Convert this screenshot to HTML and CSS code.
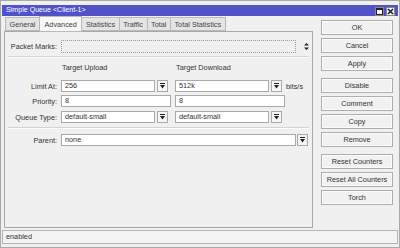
FILE: index.html
```html
<!DOCTYPE html>
<html>
<head>
<meta charset="utf-8">
<link rel="stylesheet" href="styles.css">
</head>
<body>
<div class="window">
  <div class="titlebar">
    <span class="title">Simple Queue &lt;Client-1&gt;</span>
    <div class="tctl">
      <span class="tbtn"><svg width="7" height="7" viewBox="0 0 7 7"><rect x="0.5" y="0.5" width="6" height="6" fill="none" stroke="#222" stroke-width="1"/><line x1="0" y1="1.5" x2="7" y2="1.5" stroke="#222"/></svg></span>
      <span class="tbtn"><svg width="7" height="7" viewBox="0 0 7 7"><path d="M1 1 L6 6 M6 1 L1 6" stroke="#222" stroke-width="1.6"/></svg></span>
    </div>
  </div>
  <div class="main">
    <div class="left">
      <div class="tabs">
        <span class="tab">General</span>
        <span class="tab active">Advanced</span>
        <span class="tab">Statistics</span>
        <span class="tab">Traffic</span>
        <span class="tab">Total</span>
        <span class="tab">Total Statistics</span>
      </div>
      <div class="panel">
        <div class="pm-row">
          <span class="lbl">Packet Marks:</span>
          <div class="field dotted"></div>
          <span class="updown"><svg width="5" height="7" viewBox="0 0 5 7"><path d="M2.5 0 L5 2.6 L0 2.6 Z M0 4.4 L5 4.4 L2.5 7 Z" fill="#222"/></svg></span>
        </div>
        <div class="sep"></div>
        <div class="frow hdr-row">
          <span></span>
          <span class="hdr">Target Upload</span>
          <span class="hdr">Target Download</span>
          <span></span>
        </div>
        <div class="frow limit">
          <span class="lbl">Limit At:</span>
          <div class="combo"><div class="field">256</div><span class="dd"><svg width="5" height="6" viewBox="0 0 5 6"><rect x="0" y="0" width="5" height="1" fill="#222"/><path d="M0 2 L5 2 L2.5 5.5 Z" fill="#222"/></svg></span></div>
          <div class="combo"><div class="field">512k</div><span class="dd"><svg width="5" height="6" viewBox="0 0 5 6"><rect x="0" y="0" width="5" height="1" fill="#222"/><path d="M0 2 L5 2 L2.5 5.5 Z" fill="#222"/></svg></span></div>
          <span class="unit">bits/s</span>
        </div>
        <div class="frow prio">
          <span class="lbl">Priority:</span>
          <div class="field">8</div>
          <div class="field">8</div>
          <span></span>
        </div>
        <div class="frow qtype">
          <span class="lbl">Queue Type:</span>
          <div class="combo"><div class="field">default-small</div><span class="dd"><svg width="5" height="6" viewBox="0 0 5 6"><rect x="0" y="0" width="5" height="1" fill="#222"/><path d="M0 2 L5 2 L2.5 5.5 Z" fill="#222"/></svg></span></div>
          <div class="combo"><div class="field">default-small</div><span class="dd"><svg width="5" height="6" viewBox="0 0 5 6"><rect x="0" y="0" width="5" height="1" fill="#222"/><path d="M0 2 L5 2 L2.5 5.5 Z" fill="#222"/></svg></span></div>
          <span></span>
        </div>
        <div class="sep sep2"></div>
        <div class="parent-row">
          <span class="lbl">Parent:</span>
          <div class="field">none</div>
          <span class="dd"><svg width="5" height="6" viewBox="0 0 5 6"><rect x="0" y="0" width="5" height="1" fill="#222"/><path d="M0 2 L5 2 L2.5 5.5 Z" fill="#222"/></svg></span>
        </div>
      </div>
    </div>
    <div class="buttons">
      <div class="group">
        <span class="btn">OK</span>
        <span class="btn">Cancel</span>
        <span class="btn">Apply</span>
      </div>
      <div class="group">
        <span class="btn">Disable</span>
        <span class="btn">Comment</span>
        <span class="btn">Copy</span>
        <span class="btn">Remove</span>
      </div>
      <div class="group">
        <span class="btn">Reset Counters</span>
        <span class="btn">Reset All Counters</span>
        <span class="btn">Torch</span>
      </div>
    </div>
  </div>
  <div class="status">enabled</div>
</div>
</body>
</html>
```

FILE: styles.css
```css
* { box-sizing: border-box; }
html, body { margin: 0; padding: 0; background: #f0f0f0; }
body {
  font-family: "Liberation Sans", Arial, sans-serif;
  font-size: 7.3px;
  color: #333;
}
.window {
  width: 400px;
  height: 248px;
  border: 1px solid #a9a9a9;
  background: #f0f0f0;
  padding: 4px 1px 0 1px;
  display: flex;
  flex-direction: column;
}
.titlebar {
  height: 11px;
  background: #5252c8;
  display: flex;
  align-items: center;
  justify-content: space-between;
  padding: 0 3px 0 4px;
}
.title { color: #fff; line-height: 11px; font-size: 7.1px; }
.tctl { display: flex; gap: 2px; margin-top: 2px; }
.tbtn {
  width: 9px; height: 9px;
  background: #f4f4f4;
  border: 1px solid #888;
  display: flex; align-items: center; justify-content: center;
}
.tbtn svg { display: block; }
.main {
  height: 212px;
  display: flex;
}
.left {
  margin-left: 2px;
  width: 309px;
  display: flex;
  flex-direction: column;
}
.tabs {
  height: 15px;
  display: flex;
  align-items: flex-end;
  padding-left: 1px;
  position: relative;
  z-index: 1;
}
.tab {
  height: 14px;
  line-height: 13px;
  padding: 0 3.5px;
  background: #e4e4e4;
  border: 1px solid #b9b9b9;
  border-right: none;
  white-space: nowrap;
  color: #444;
}
.tab:last-child { border-right: 1px solid #b9b9b9; }
.tab.active {
  height: 16px;
  line-height: 15px;
  padding: 0 4.5px;
  background: #f7f7f7;
  border-right: 1px solid #b9b9b9;
  margin-bottom: -1px;
}
.tab.active + .tab { border-left: none; }
.panel {
  flex: 1;
  border: 1px solid #a8a8a8;
  background: #f0f0f0;
  padding-top: 8px;
}
.lbl { text-align: right; white-space: nowrap; color: #333; }
.field {
  height: 12px;
  background: #fff;
  border: 1px solid #a9a9a9;
  line-height: 10px;
  padding-left: 3px;
  white-space: nowrap;
  overflow: hidden;
  color: #333;
}
.field.dotted {
  background: #f0f0f0;
  border: 1px dotted #9a9a9a;
  height: 13px;
}
.pm-row {
  display: grid;
  grid-template-columns: 52px 235px 10px;
  column-gap: 4px;
  align-items: center;
}
.updown { display: flex; justify-content: center; margin-left: 2px; }
.updown svg { display: block; }
.sep {
  margin: 3px 3px 0 3px;
  height: 2px;
  border-top: 1px solid #d2d2d2;
  border-bottom: 1px solid #fcfcfc;
}
.sep2 { margin-top: 4px; }
.frow {
  display: grid;
  grid-template-columns: 52px 110px 110px 1fr;
  column-gap: 4px;
  align-items: center;
  height: 12px;
}
.hdr-row { margin-top: 4px; height: 10px; }
.hdr { padding-left: 1px; color: #333; }
.limit { margin-top: 8px; }
.prio { margin-top: 3px; }
.qtype { margin-top: 4px; }
.combo {
  display: flex;
  gap: 2px;
  padding-right: 3px;
}
.combo .field { flex: 1; }
.dd {
  width: 11px;
  height: 12px;
  flex: none;
  background: #f6f6f6;
  border: 1px solid #a9a9a9;
  display: flex;
  align-items: center;
  justify-content: center;
}
.dd svg { display: block; }
.unit { margin-left: -3px; color: #333; }
.parent-row {
  margin-top: 5px;
  display: grid;
  grid-template-columns: 52px 235px 11px;
  column-gap: 4px;
  align-items: center;
}
.parent-row .dd { margin-left: -3px; }
.buttons {
  margin-left: 8px;
  width: 72px;
  padding-top: 4px;
  display: flex;
  flex-direction: column;
  gap: 7px;
}
.group { display: flex; flex-direction: column; gap: 3px; }
.btn {
  height: 15px;
  border: 1px solid #adadad;
  background: #f1f1f1;
  box-shadow: inset 0 0 0 1px #fbfbfb;
  text-align: center;
  line-height: 13px;
  white-space: nowrap;
  color: #333;
}
.status {
  margin-top: 2px;
  height: 14px;
  border: 1px solid #b4b4b4;
  background: #f3f3f3;
  padding-left: 3px;
  line-height: 12px;
}
```
